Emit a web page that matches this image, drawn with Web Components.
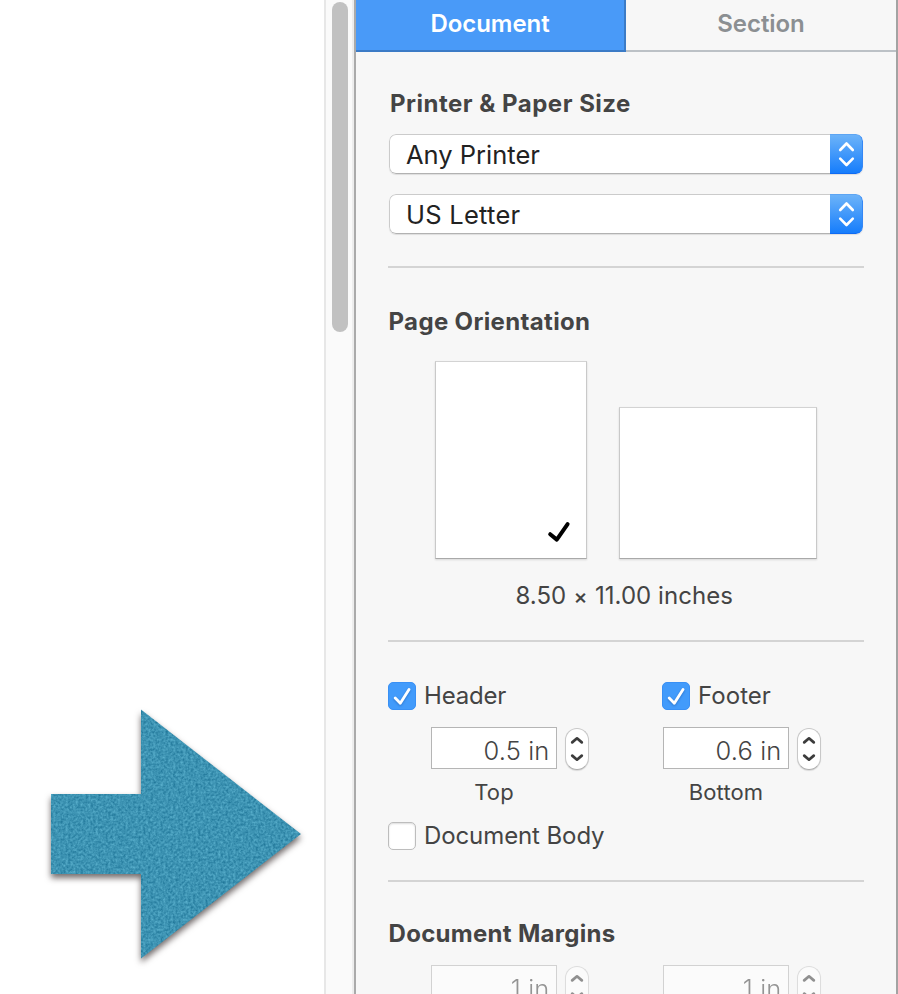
<!DOCTYPE html>
<html lang="en">
<head>
<meta charset="utf-8">
<title>Document</title>
<style>
  html, body { margin: 0; height: 100%; overflow: hidden; background: #fff; }
  body { font-family: Inter, "Liberation Sans", sans-serif; color: #444; }
</style>
</head>
<body>
<page-app></page-app>
<script>
const html = String.raw;

function define(name, content) {
  const template = document.createElement("template");
  template.innerHTML = content;
  customElements.define(
    name,
    class extends HTMLElement {
      constructor() {
        super();
        this.attachShadow({ mode: "open" });
        this.shadowRoot.append(template.content.cloneNode(true));
      }
    }
  );
}

define("arrow-shape", html`
  <style>
    :host { display: block; }
    svg { display: block; overflow: visible; }
  </style>
  <svg width="250" height="250" viewBox="0 0 250 250">
    <filter id="grain" x="-10%" y="-10%" width="120%" height="125%" color-interpolation-filters="sRGB">
      <feTurbulence type="fractalNoise" baseFrequency="0.4" numOctaves="2" seed="4" result="noise" />
      <feColorMatrix in="noise" values="0.3 0 0 0 0.089  0.3 0 0 0 0.427  0.27 0 0 0 0.566  0 0 0 0 1" />
      <feComposite in2="SourceGraphic" operator="in" result="fill" />
      <feDropShadow in="fill" dx="0" dy="4" stdDeviation="3" flood-color="#1c1010" flood-opacity="0.62" />
    </filter>
    <path filter="url(#grain)" d="M0 85H90V.5L250 125 90 249.5V165H0Z" fill="#3d93b3" />
  </svg>
`);

define("page-canvas", html`
  <style>
    :host {
      display: flex;
      flex-direction: column;
      justify-content: flex-end;
      width: 324px;
      box-sizing: border-box;
      padding: 0 0 35px 51px;
    }
  </style>
  <slot></slot>
`);

define("scroll-track", html`
  <style>
    :host {
      display: block;
      box-sizing: border-box;
      width: 30px;
      padding: 2px 4px 0 6px;
      border-left: 2px solid #e7e7e7;
      border-right: 2px solid #ededed;
      background: #fafafa;
    }
    div { width: 16px; height: 330px; border-radius: 8px; background: #c1c1c1; }
  </style>
  <div></div>
`);

define("tab-item", html`
  <style>
    :host {
      display: flex;
      justify-content: center;
      align-items: center;
      box-sizing: border-box;
      width: 270px;
      height: 52px;
      padding-bottom: 3px;
      border-bottom: 2px solid #bcc1c6;
      font-size: 24px;
      font-weight: 600;
      letter-spacing: -0.05px;
      color: #8b8f92;
    }
    :host([selected]) {
      border-right: 2px solid #3b7bc6;
      border-bottom-color: #3b7bc6;
      background: #499af8;
      color: #fff;
    }
  </style>
  <slot></slot>
`);

define("section-title", html`
  <style>
    :host {
      display: block;
      padding-left: 0.5px;
      font-size: 24px;
      font-weight: 700;
      line-height: 28px;
      white-space: nowrap;
      letter-spacing: var(--track, 0.35px);
    }
  </style>
  <slot></slot>
`);

define("rule-line", html`
  <style>
    :host { display: block; height: 2px; background: #d4d4d4; }
  </style>
`);

define("popup-button", html`
  <style>
    :host {
      display: flex;
      height: 40px;
      width: 474px;
      margin-left: 1px;
      border-radius: 7px;
      overflow: hidden;
      box-shadow: 0 1px 1px rgba(0, 0, 0, 0.1);
      color: #222;
    }
    .label {
      display: flex;
      flex: 1;
      align-items: center;
      padding: 0 0 0 16px;
      border: 1px solid #cbcbcb;
      border-bottom-color: #b2b2b2;
      border-right: 0;
      border-radius: 7px 0 0 7px;
      background: #fff;
      font-size: 25.5px;
      letter-spacing: var(--track, 0);
    }
    .cap {
      width: 33px;
      box-sizing: border-box;
      border: solid;
      border-width: 1px 1px 1px 0;
      border-color: #5da5f3 #3587f5 #0f6bf3 #3587f5;
      border-radius: 0 7px 7px 0;
      background: linear-gradient(#6cb3f9, #167dfc);
    }
    svg { display: block; }
  </style>
  <div class="label"><slot></slot></div>
  <div class="cap">
    <svg width="32" height="38" fill="none" stroke="#fff" stroke-width="2.6" stroke-linecap="round" stroke-linejoin="round">
      <path d="M10.2 15 16.5 8.5 22.8 15M10.2 23.6 16.5 30 22.8 23.6" />
    </svg>
  </div>
`);

define("paper-tile", html`
  <style>
    :host {
      display: flex;
      justify-content: flex-end;
      align-items: flex-end;
      box-sizing: border-box;
      width: 152px;
      height: 198px;
      border: 1px solid #c9c9c9;
      border-top-color: #d3d3d3;
      border-bottom-color: #a9a9a9;
      background: #fff;
      box-shadow: 0 1px 2px rgba(0, 0, 0, 0.13);
    }
    :host([landscape]) { width: 198px; height: 152px; }
    svg { display: none; margin: 0 15px 14px 0; }
    :host([checked]) svg { display: block; }
  </style>
  <svg width="24" height="24" fill="none" stroke="#000" stroke-width="4" stroke-linecap="round" stroke-linejoin="round">
    <path d="M3.2 14.2 9.8 19.6 20.6 4.1" />
  </svg>
`);

define("check-box", html`
  <style>
    :host {
      display: flex;
      align-items: center;
      gap: 8px;
      height: 28px;
      font-size: 24px;
      font-weight: 420;
      line-height: 28px;
      white-space: nowrap;
      letter-spacing: var(--track, -0.1px);
    }
    .box {
      width: 28px;
      height: 28px;
      box-sizing: border-box;
      border: 1px solid #bdbdbd;
      border-radius: 5px;
      background: #fff;
      box-shadow: inset 0 1px 2px rgba(0, 0, 0, 0.14);
    }
    :host([checked]) .box { border-color: #3990f5; background: #429bfb; box-shadow: none; }
    svg { display: none; filter: drop-shadow(0 1px 1px rgba(0, 40, 110, 0.35)); }
    :host([checked]) svg { display: block; }
  </style>
  <div class="box">
    <svg width="26" height="26" fill="none" stroke="#fff" stroke-width="2.8" stroke-linecap="round" stroke-linejoin="round">
      <path d="M6.2 15 11.3 20.3 20 6.5" />
    </svg>
  </div>
  <span><slot></slot></span>
`);

define("measure-field", html`
  <style>
    :host { display: flex; flex-direction: column; gap: 10px; width: 158px; padding-bottom: 1px; }
    :host([disabled]) .row { opacity: 0.55; }
    .row { display: flex; gap: 8px; height: 43px; }
    .value {
      display: flex;
      justify-content: flex-end;
      align-items: center;
      box-sizing: border-box;
      width: 126px;
      height: 42px;
      padding: 4px 6.5px 0 0;
      border: 1px solid #b5b5b5;
      background: #fff;
      font-size: 25.5px;
      font-weight: 350;
      letter-spacing: 0.15px;
    }
    .stepper {
      box-sizing: border-box;
      width: 24px;
      height: 42px;
      margin-top: 1px;
      border: 1px solid #c8c8c8;
      border-bottom-color: #aeaeae;
      border-radius: 12px;
      background: #fff;
      box-shadow: 0 1px 1px rgba(0, 0, 0, 0.12);
    }
    svg { display: block; }
    .caption {
      width: 126px;
      text-align: center;
      font-size: 22px;
      font-weight: 420;
      line-height: 24px;
      letter-spacing: 0.15px;
    }
  </style>
  <div class="row">
    <div class="value"><slot></slot></div>
    <div class="stepper">
      <svg width="22" height="40" fill="none" stroke="#3c3c3c" stroke-width="2.7" stroke-linecap="round" stroke-linejoin="round">
        <path d="M6.2 13.4 11 9.3 15.8 13.4M6.2 26.6 11 30.7 15.8 26.6" />
      </svg>
    </div>
  </div>
  <div class="caption"><slot name="caption"></slot></div>
`);

define("inspector-panel", html`
  <style>
    :host {
      display: block;
      box-sizing: border-box;
      width: 544px;
      border: solid;
      border-width: 0 2px;
      border-color: #aaa #a3a3a3 #aaa #aaa;
      background: #f7f7f7;
    }
    .tabs { display: flex; }
    .body { display: flex; flex-direction: column; padding: 38px 32px 0; }
  </style>
  <div class="tabs"><slot name="tab"></slot></div>
  <div class="body"><slot></slot></div>
`);

define("page-app", html`
  <style>
    :host { display: flex; width: 898px; height: 994px; overflow: hidden; }
    .selects { display: flex; flex-direction: column; gap: 20px; margin: 16px 0 32px; }
    .papers { display: flex; align-items: flex-end; gap: 32px; margin: 25px 0 23px 47px; }
    .size {
      padding-left: 127.5px;
      margin-bottom: 30px;
      font-size: 24px;
      font-weight: 420;
      line-height: 28px;
      white-space: nowrap;
      letter-spacing: 0.05px;
    }
    .times { display: inline-block; width: 15px; text-align: center; font-size: 21px; font-weight: 500; line-height: 20px; }
    .columns { display: grid; grid-template-columns: 274px 202px; row-gap: 17px; }
    .columns measure-field { margin-left: 43px; }
    .columns measure-field:nth-child(even) { margin-left: 1px; }
  </style>
  <page-canvas><arrow-shape></arrow-shape></page-canvas>
  <scroll-track></scroll-track>
  <inspector-panel>
    <tab-item slot="tab" selected>Document</tab-item>
    <tab-item slot="tab">Section</tab-item>
    <section-title style="padding-left: 2px; --track: 0.5px">Printer &amp; Paper Size</section-title>
    <div class="selects">
      <popup-button>Any Printer</popup-button>
      <popup-button style="--track: 0.26px">US Letter</popup-button>
    </div>
    <rule-line></rule-line>
    <section-title style="margin-top: 40px">Page Orientation</section-title>
    <div class="papers">
      <paper-tile checked></paper-tile>
      <paper-tile landscape></paper-tile>
    </div>
    <div class="size">8.50 <span class="times">×</span> 11.00 inches</div>
    <rule-line></rule-line>
    <div class="columns" style="margin-top: 40px">
      <check-box checked style="--track: -0.2px">Header</check-box>
      <check-box checked style="--track: 0.05px">Footer</check-box>
      <measure-field>0.5 in<span slot="caption">Top</span></measure-field>
      <measure-field>0.6 in<span slot="caption">Bottom</span></measure-field>
      <check-box>Document Body</check-box>
    </div>
    <rule-line style="margin-top: 30px"></rule-line>
    <section-title style="margin-top: 38px; --track: 0.3px">Document Margins</section-title>
    <div class="columns" style="margin-top: 17px">
      <measure-field disabled>1 in</measure-field>
      <measure-field disabled>1 in</measure-field>
    </div>
  </inspector-panel>
`);
</script>
</body>
</html>
